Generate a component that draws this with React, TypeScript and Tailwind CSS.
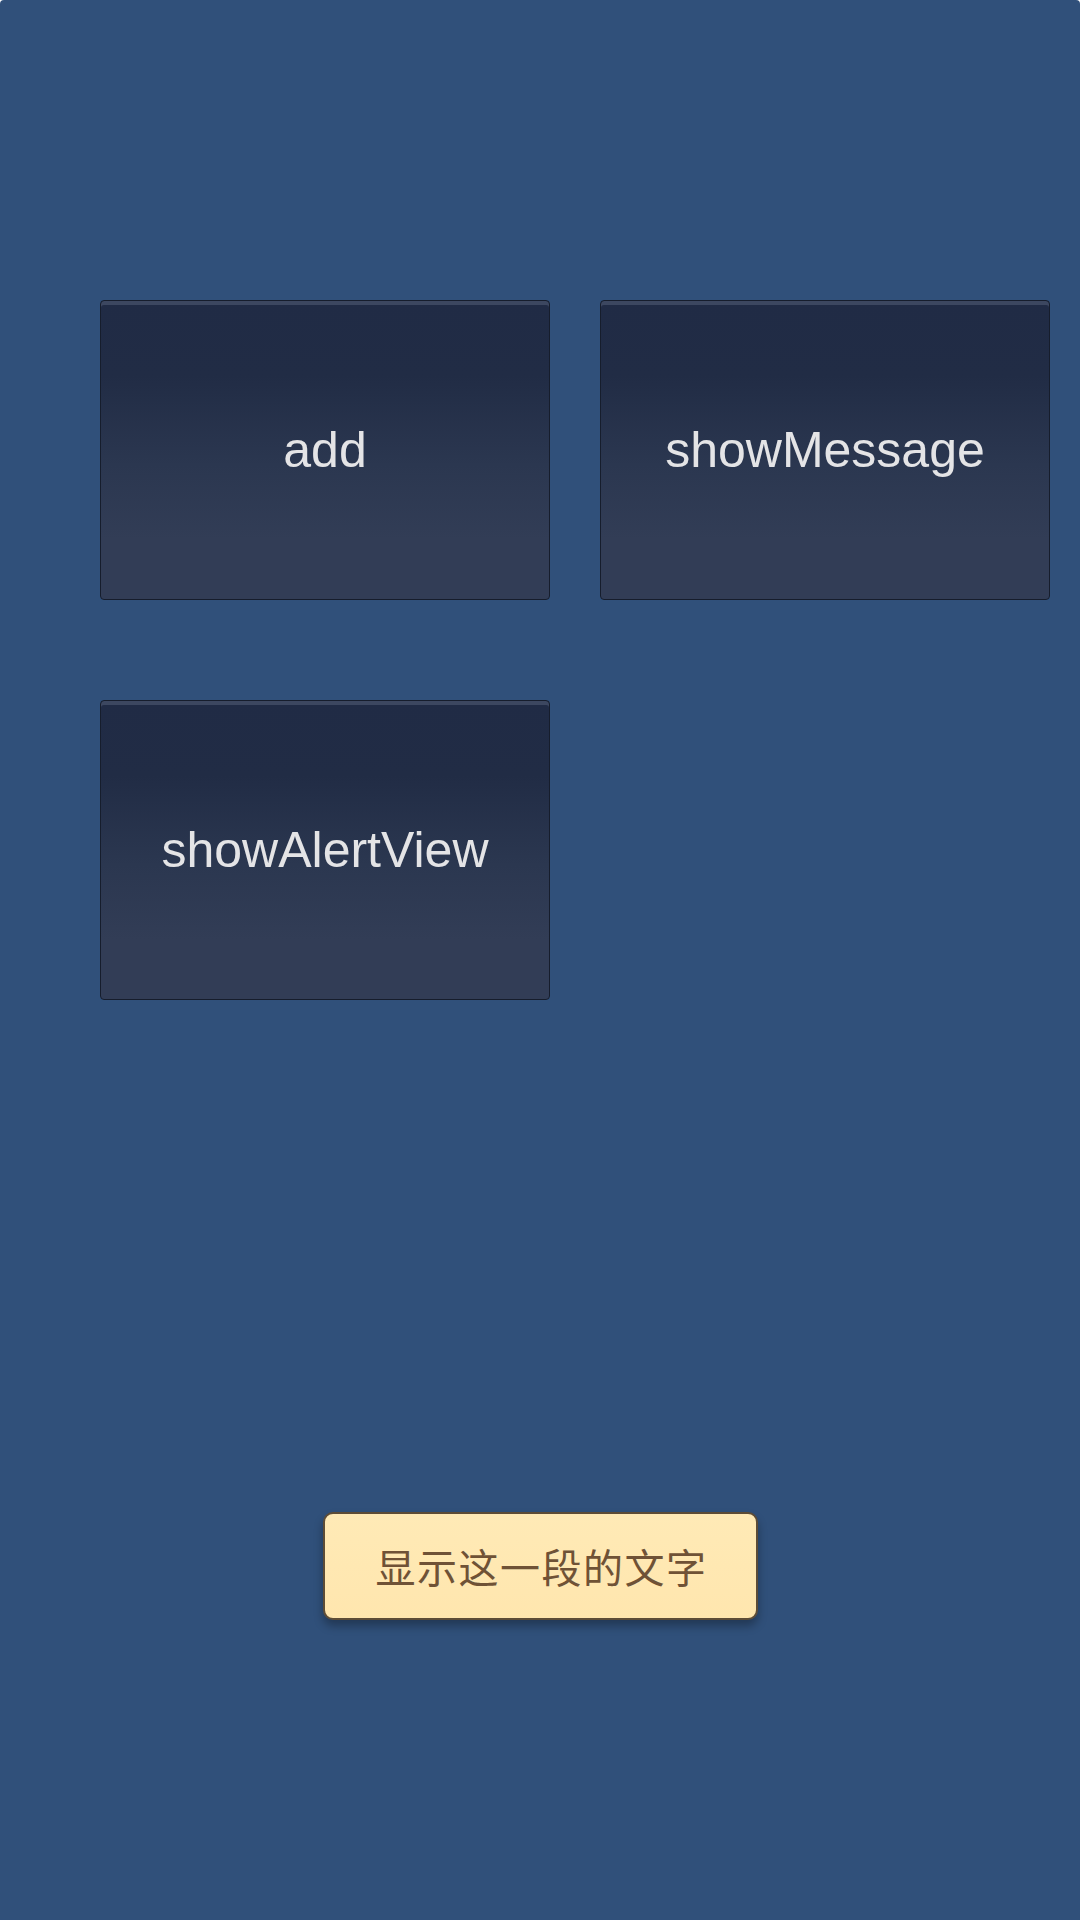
import React from "react";

const names = ["add", "showMessage", "showAlertView"];

function DarkButton({ label }: { label: string }) {
  return (
    <button className="relative flex h-[300px] w-[450px] items-center justify-center overflow-hidden rounded-[4px] border border-[#161d2c] bg-[linear-gradient(to_bottom,#202b45_0%,#212c45_25%,#2b3750_55%,#323d56_80%,#323d56_100%)] shadow-[inset_0_4px_0_#3c4760]">
      <span className="font-['Liberation_Sans',Arial,sans-serif] text-[50px] text-[#e4e4e6]">
        {label}
      </span>
    </button>
  );
}

export default function App() {
  return (
    <div className="bg-white">
      <div className="flex h-[1920px] w-[1080px] flex-col rounded-t-[4px] bg-[#30507a]">
        <div className="grid grid-cols-[450px_450px] gap-x-[50px] gap-y-[100px] pl-[100px] pt-[300px]">
          {names.map((n) => (
            <DarkButton key={n} label={n} />
          ))}
        </div>
        <div className="flex justify-center pt-[512px]">
          <button className="flex h-[108px] w-[435px] items-center justify-center rounded-[10px] border-2 border-[#5d4c36] bg-[linear-gradient(to_bottom,#ffeab6,#ffe6ae)] shadow-[0_6px_10px_rgba(0,0,0,0.3)]">
            <span className="font-['Noto_Sans_CJK_SC','Noto_Sans',sans-serif] pl-[3px] text-[40px] tracking-[1.5px] text-[#6f5236]">
              显示这一段的文字
            </span>
          </button>
        </div>
      </div>
    </div>
  );
}
